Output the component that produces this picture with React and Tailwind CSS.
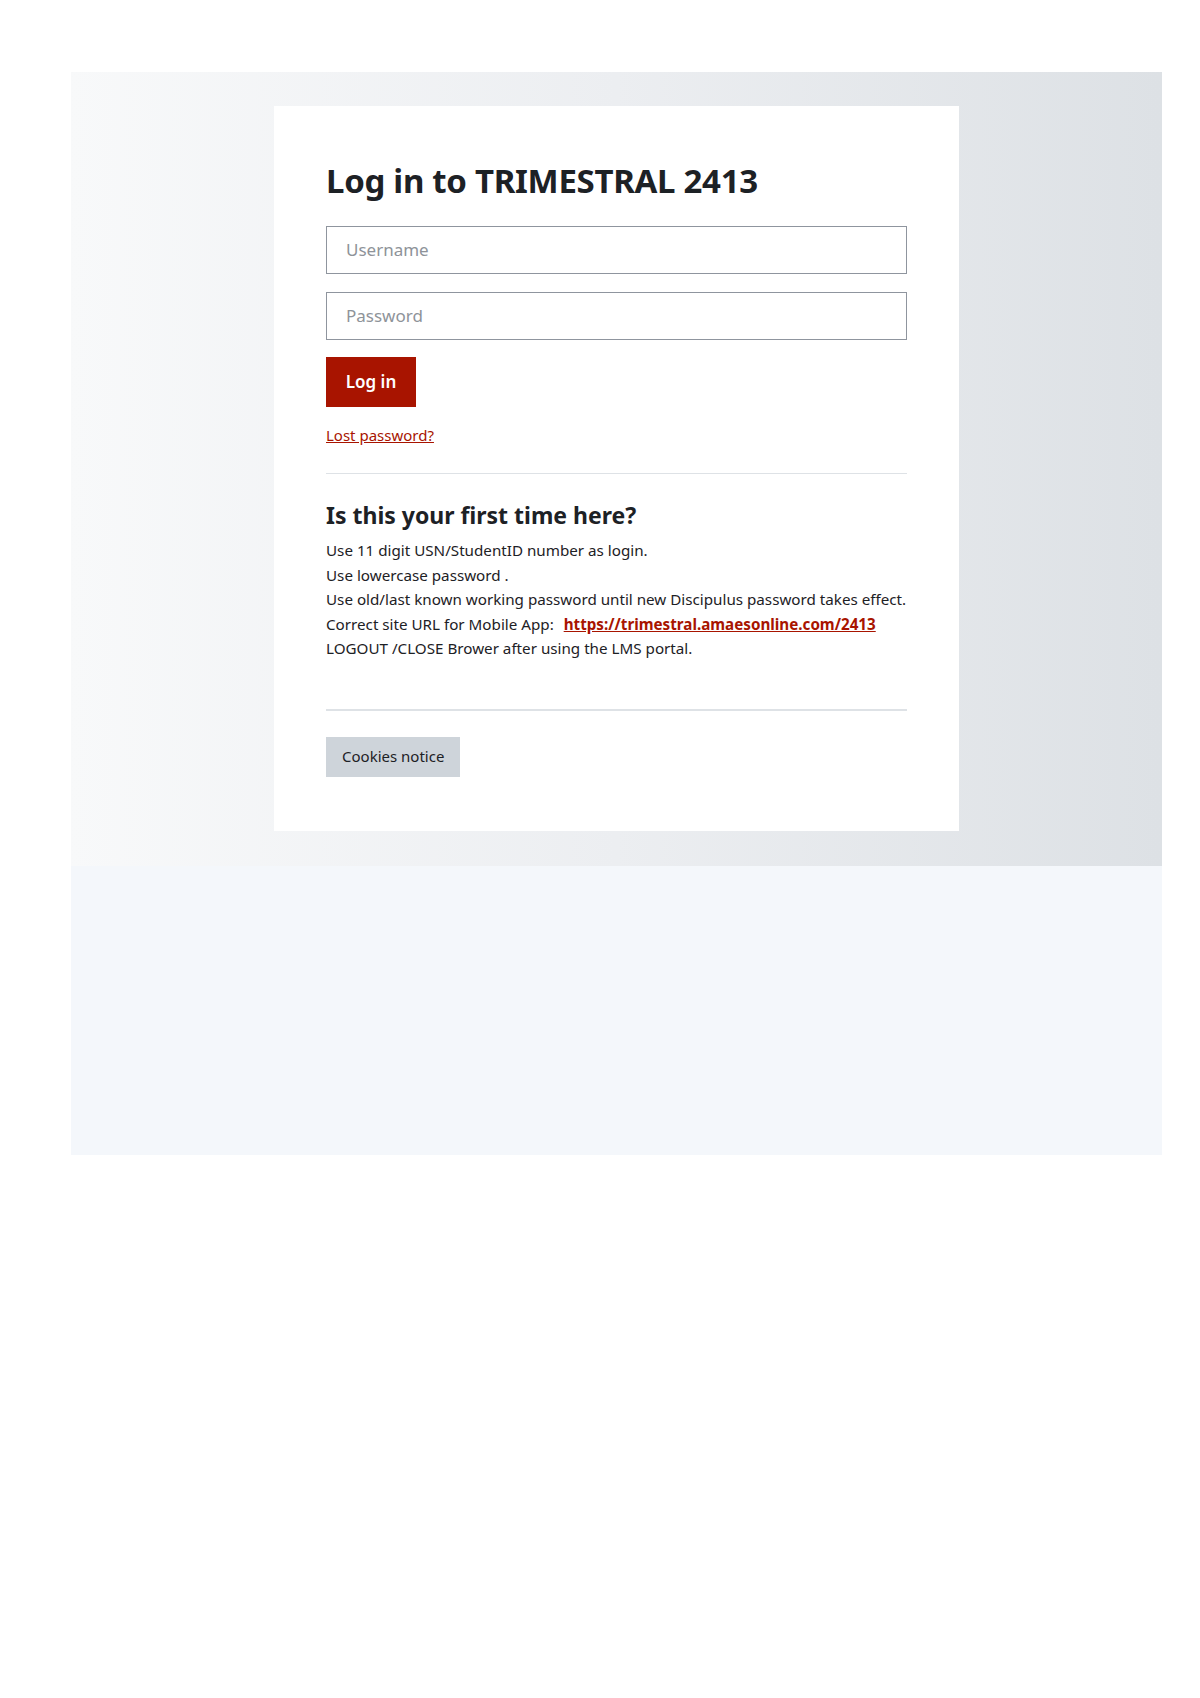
import { useState } from "react";

const lines = [
  "Use 11 digit USN/StudentID number as login.",
  "Use lowercase password .",
  "Use old/last known working password until new Discipulus password takes effect.",
];

export default function App() {
  const [username, setUsername] = useState("");
  const [password, setPassword] = useState("");

  function handleSubmit(e) {
    e.preventDefault();
  }

  return (
    <div
      className="min-h-[1698px] bg-white pt-[72px] pl-[71px] text-[#1d2125]"
      style={{ fontFamily: '"Noto Sans", "Open Sans", sans-serif' }}
    >
      <div className="w-[1091px] h-[1083px] bg-[#f4f7fb]">
        {/* Gradient band with the login card */}
        <div className="h-[794px] bg-linear-to-r from-[#f8f9fa] via-[#eceef1] to-[#dde1e5] pt-[34px]">
          <div className="mx-auto w-[685px] h-[725px] bg-white px-[52px] pt-[55px]">
            <h2 className="text-[33px] leading-[1.2] font-bold tracking-[-0.3px] mb-[25px]">
              Log in to TRIMESTRAL 2413
            </h2>

            <form onSubmit={handleSubmit}>
              <input
                type="text"
                value={username}
                onChange={(e) => setUsername(e.target.value)}
                placeholder="Username"
                className="block w-full h-[48px] border border-[#8f959e] px-[19px] text-[17px] placeholder:text-[#8e9399] outline-none mb-[18px]"
              />
              <input
                type="password"
                value={password}
                onChange={(e) => setPassword(e.target.value)}
                placeholder="Password"
                className="block w-full h-[48px] border border-[#8f959e] px-[19px] text-[17px] placeholder:text-[#8e9399] outline-none mb-[17px]"
              />
              <button
                type="submit"
                className="h-[50px] w-[90px] bg-[#a81400] text-white text-[17px] font-semibold"
              >
                Log in
              </button>
            </form>

            <p className="mt-[16px] text-[15px] leading-[24px]">
              <a href="#" className="text-[#a81400] underline">
                Lost password?
              </a>
            </p>

            <hr className="mt-[26px] border-t border-[#dee2e6]" />

            {/* First time notes */}
            <h2 className="mt-[28px] text-[23px] leading-[1.2] font-bold mb-[9px]">
              Is this your first time here?
            </h2>
            <div className="text-[15.2px] leading-[24.5px]">
              {lines.map((line) => (
                <div key={line}>{line}</div>
              ))}
              <div>
                Correct site URL for Mobile App:{" "}
                <a
                  href="#"
                  className="ml-[6px] text-[#a81400] font-bold underline"
                >
                  https://trimestral.amaesonline.com/2413
                </a>
              </div>
              <div>LOGOUT /CLOSE Brower after using the LMS portal.</div>
            </div>

            <hr className="mt-[48px] border-t-2 border-[#dee2e6]" />

            <button className="mt-[26px] h-[40px] px-[16px] bg-[#ced4da] text-[15px]">
              Cookies notice
            </button>
          </div>
        </div>
      </div>
    </div>
  );
}
